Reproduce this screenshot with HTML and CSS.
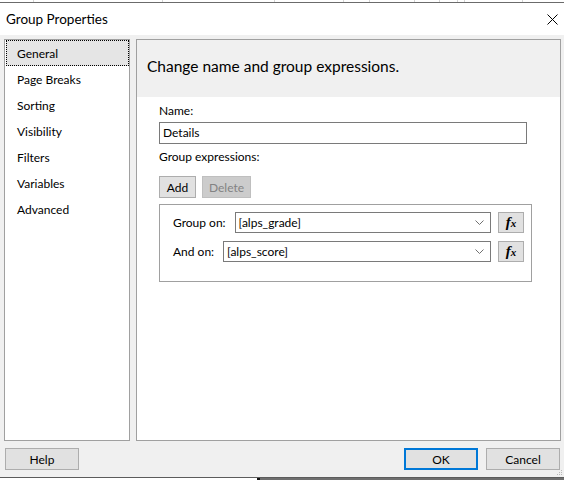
FILE: index.html
```html
<!DOCTYPE html>
<html lang="en">

<head>
    <meta charset="UTF-8">
    <meta name="viewport" content="width=device-width, initial-scale=1.0">
    <title>Group Properties</title>
    <link rel="stylesheet" href="styles.css">
</head>

<body>
    <!-- strip of the window behind the dialog -->
    <div class="desk-top">
        <span style="width: 34px;"></span>
        <span style="width: 129px;"></span>
        <span style="width: 112px;"></span>
        <span style="width: 69px;"></span>
        <span style="width: 26px;"></span>
        <span style="width: 45px;"></span>
        <span style="width: 25px;"></span>
        <span style="width: 18px;"></span>
        <span style="width: 7px;"></span>
        <span style="width: 58px;"></span>
    </div>

    <div class="dialog">
        <div class="titlebar">
            <span class="title">Group Properties</span>
            <svg class="close" width="11" height="11" viewBox="0 0 11 11">
                <path d="M0.5 0.5 L10.5 10.5 M10.5 0.5 L0.5 10.5" stroke="#000" stroke-width="1" fill="none" />
            </svg>
        </div>

        <div class="main">
            <ul class="nav">
                <li class="active">General</li>
                <li>Page Breaks</li>
                <li>Sorting</li>
                <li>Visibility</li>
                <li>Filters</li>
                <li>Variables</li>
                <li>Advanced</li>
            </ul>

            <div class="page">
                <div class="page-head">Change name and group expressions.</div>
                <div class="page-body">
                    <label class="label">Name:</label>
                    <div class="textbox">Details</div>
                    <label class="label second">Group expressions:</label>
                    <div class="btn-row">
                        <button class="btn add">Add</button>
                        <button class="btn delete" disabled>Delete</button>
                    </div>
                    <div class="expr-box">
                        <div class="expr-row">
                            <span class="row-label">Group on:</span>
                            <div class="combo">
                                <span>[alps_grade]</span>
                                <svg width="9" height="5" viewBox="0 0 9 5">
                                    <path d="M0.5 0.5 L4.5 4.5 L8.5 0.5" stroke="#707070" fill="none" />
                                </svg>
                            </div>
                            <button class="fx"><i>f</i><i class="sub">x</i></button>
                        </div>
                        <div class="expr-row">
                            <span class="row-label">And on:</span>
                            <div class="combo">
                                <span>[alps_score]</span>
                                <svg width="9" height="5" viewBox="0 0 9 5">
                                    <path d="M0.5 0.5 L4.5 4.5 L8.5 0.5" stroke="#707070" fill="none" />
                                </svg>
                            </div>
                            <button class="fx"><i>f</i><i class="sub">x</i></button>
                        </div>
                    </div>
                </div>
            </div>
        </div>

        <div class="footer">
            <button class="btn wide">Help</button>
            <button class="btn wide ok">OK</button>
            <button class="btn wide">Cancel</button>
        </div>

        <!-- size grip -->
        <svg class="grip" width="7" height="7" viewBox="0 0 7 7">
            <rect x="5" y="1" width="1" height="1" fill="#b8b8b8" />
            <rect x="3" y="3" width="1" height="1" fill="#b8b8b8" />
            <rect x="5" y="3" width="1" height="1" fill="#b8b8b8" />
            <rect x="1" y="5" width="1" height="1" fill="#b8b8b8" />
            <rect x="3" y="5" width="1" height="1" fill="#b8b8b8" />
            <rect x="5" y="5" width="1" height="1" fill="#b8b8b8" />
        </svg>
    </div>

    <div class="desk-bottom">
        <span class="light"></span>
        <span class="mark"></span>
        <span class="dark"></span>
    </div>
</body>

</html>
```

FILE: styles.css
```css
* {
    margin: 0;
    padding: 0;
    box-sizing: border-box;
}

body {
    width: 564px;
    height: 480px;
    overflow: hidden;
    background-color: #fff;
    font-family: Lato, "Open Sans", sans-serif;
    font-size: 12px;
    color: #000;
}

/* window behind */
.desk-top {
    display: flex;
    height: 2px;
}

.desk-top span {
    flex: none;
    border-right: 1px solid #d4d4d4;
}

.desk-bottom {
    display: flex;
    height: 2px;
}

.desk-bottom .light {
    width: 257px;
    background-color: #fff;
}

.desk-bottom .mark {
    width: 3px;
    background-color: #111;
}

.desk-bottom .dark {
    flex: 1;
    background-color: #6e6e6e;
}

/* dialog frame */
.dialog {
    position: relative;
    background-color: #f0f0f0;
    border-top: 1px solid #6b6b6b;
    border-bottom: 1px solid #5c5c5c;
}

.titlebar {
    height: 32px;
    background-color: #fff;
    display: flex;
    align-items: center;
    justify-content: space-between;
    padding: 0 6px 0 6px;
}

.title {
    font-size: 13.5px;
}

.close {
    margin-top: 1px;
}

.main {
    display: flex;
    gap: 6px;
    padding: 4px 3px 0 4px;
}

/* left list */
.nav {
    width: 126px;
    height: 402px;
    list-style: none;
    background-color: #fff;
    border: 1px solid #a0a0a0;
    padding-left: 1px;
}

.nav li {
    height: 26px;
    padding: 1px 0 0 10px;
    line-height: 23px;
    border: 1px solid transparent;
}

.nav li.active {
    background-color: #e5e5e5;
    border: 1px dotted #000;
}

/* right page */
.page {
    flex: 1;
    height: 402px;
    background-color: #fff;
    border: 1px solid #a0a0a0;
}

.page-head {
    height: 57px;
    background-color: #f0f0f0;
    padding: 16px 0 0 10px;
    font-size: 15.5px;
    line-height: 20px;
}

.page-body {
    padding: 6px 0 0 22px;
}

.label {
    display: block;
    line-height: 16px;
}

.label.second {
    margin-top: 5px;
}

.textbox {
    width: 368px;
    height: 22px;
    margin-top: 3px;
    padding-left: 3px;
    line-height: 20px;
    border: 1px solid #7a7a7a;
}

.btn {
    height: 22px;
    border: 1px solid #adadad;
    background-color: #e1e1e1;
    font: inherit;
    color: #000;
}

.btn-row {
    display: flex;
    gap: 6px;
    margin-top: 11px;
}

.btn.add {
    width: 37px;
}

.btn.delete {
    width: 49px;
    background-color: #cccccc;
    border-color: #bfbfbf;
    color: #838383;
}

/* group expressions box */
.expr-box {
    width: 373px;
    height: 78px;
    margin-top: 6px;
    border: 1px solid #a0a0a0;
    padding: 7px 7px 0 13px;
    display: flex;
    flex-direction: column;
    gap: 8px;
}

.expr-row {
    display: flex;
    align-items: center;
    height: 21px;
}

.row-label {
    margin-right: 9px;
}

.combo {
    flex: 1;
    height: 21px;
    border: 1px solid #7a7a7a;
    background-color: #fff;
    display: flex;
    align-items: center;
    justify-content: space-between;
    padding: 0 6px 0 3px;
}

.fx {
    width: 26px;
    height: 21px;
    margin-left: 7px;
    border: 1px solid #adadad;
    background-color: #e1e1e1;
    font-family: "Liberation Serif", serif;
    font-weight: bold;
    font-size: 15px;
    line-height: 14px;
}

.fx .sub {
    font-size: 11px;
}

/* bottom buttons */
.footer {
    display: flex;
    gap: 8px;
    padding: 7px 4px 7px 5px;
}

.btn.wide {
    width: 74px;
}

.btn.ok {
    margin-left: auto;
    border: 2px solid #0078d7;
}

.grip {
    position: absolute;
    right: 1px;
    bottom: 1px;
}
```
